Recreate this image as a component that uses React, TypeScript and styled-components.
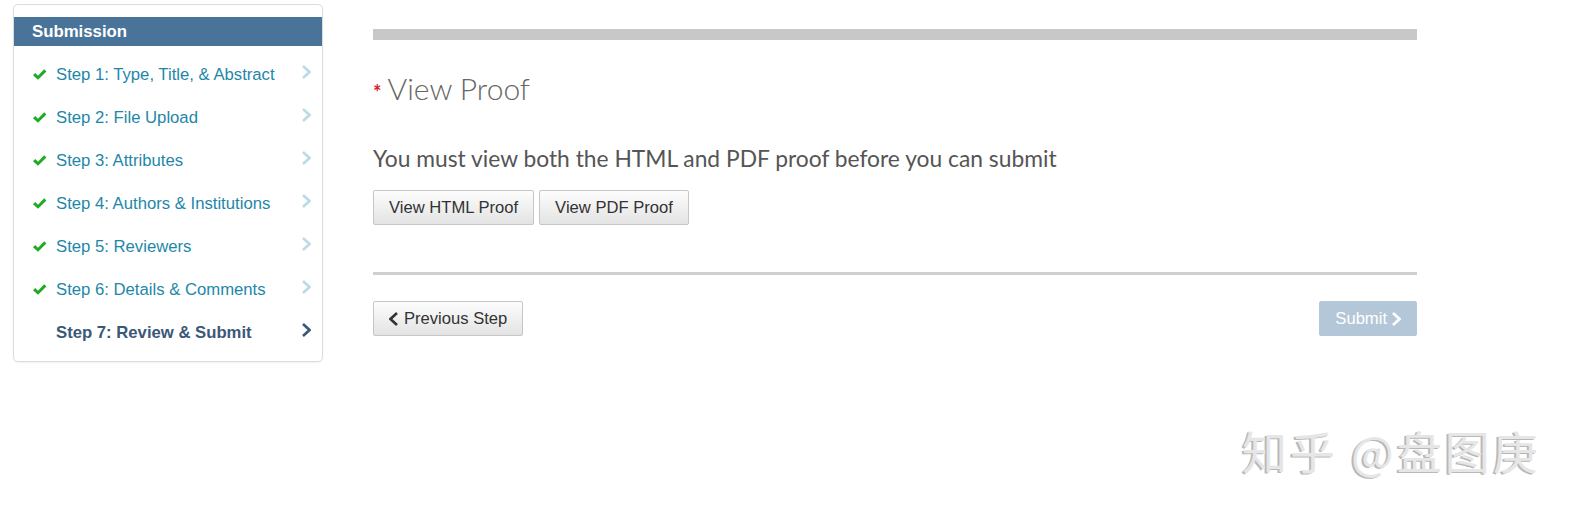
import React from 'react';
import styled, { createGlobalStyle } from 'styled-components';

const GlobalStyle = createGlobalStyle`
  html, body {
    margin: 0;
    padding: 0;
    background: #fff;
  }
  body {
    font-family: "Liberation Sans", Arial, sans-serif;
    width: 1573px;
    height: 516px;
    overflow: hidden;
    position: relative;
  }
`;

const Page = styled.div`
  display: flex;
  align-items: flex-start;
  padding: 4px 0 0 13px;
  gap: 50px;
`;

const Sidebar = styled.div`
  width: 308px;
  border: 1px solid #dcdcdc;
  border-radius: 5px;
  padding: 12px 0 7px;
  box-shadow: 0 1px 2px rgba(0, 0, 0, 0.06);
`;

const SidebarHeader = styled.div`
  height: 29px;
  background: #4a7399;
  color: #fff;
  font-weight: bold;
  font-size: 16.8px;
  display: flex;
  align-items: center;
  padding-left: 18px;
`;

const StepList = styled.ul`
  list-style: none;
  margin: 0;
  padding: 7px 0 0;
`;

const StepRow = styled.li<{ $current?: boolean }>`
  height: 43px;
  display: flex;
  align-items: center;
  padding: 0 11px 0 18px;
  font-size: 16.7px;
  color: ${p => (p.$current ? '#3b5878' : '#1e87a8')};
  font-weight: ${p => (p.$current ? 'bold' : 'normal')};
`;

const CheckSlot = styled.span`
  width: 24px;
  display: flex;
  align-items: center;
`;

const StepLabel = styled.span`
  flex: 1;
`;

const ChevronSlot = styled.span`
  display: flex;
  margin-top: -6px;
`;

const Main = styled.div`
  width: 1044px;
  padding-top: 25px;
`;

const ProgressBar = styled.div`
  height: 11px;
  background: #c8c8c8;
`;

const Heading = styled.h2`
  margin: 30px 0 0;
  font-family: "Lato", "Open Sans", sans-serif;
  font-weight: 300;
  font-size: 30px;
  color: #666;
  display: flex;
  align-items: baseline;
  gap: 6px;
`;

const Required = styled.span`
  color: #d0202e;
  font-size: 20px;
  font-weight: bold;
`;

const Notice = styled.p`
  margin: 38px 0 0;
  font-family: "Lato", "Open Sans", sans-serif;
  font-size: 22.8px;
  color: #555;
`;

const ButtonRow = styled.div`
  display: flex;
  gap: 5px;
  margin-top: 18px;
`;

const Button = styled.button`
  height: 35px;
  padding: 0 15px;
  font-family: "Liberation Sans", Arial, sans-serif;
  font-size: 16.6px;
  color: #333;
  border: 1px solid #c6c6c6;
  border-radius: 2px;
  background: linear-gradient(#fdfdfd, #e3e3e3);
  display: flex;
  align-items: center;
  gap: 5px;
  cursor: pointer;
`;

const Divider = styled.hr`
  margin: 47px 0 0;
  border: none;
  height: 3px;
  background: #cfcfcf;
`;

const NavRow = styled.div`
  display: flex;
  justify-content: space-between;
  margin-top: 26px;
`;

const SubmitButton = styled.button`
  height: 35px;
  padding: 0 15px;
  font-family: "Liberation Sans", Arial, sans-serif;
  font-size: 16.6px;
  color: #fff;
  border: 1px solid #b5c7d8;
  border-radius: 2px;
  background: #b4c7d9;
  display: flex;
  align-items: center;
  gap: 4px;
`;

const Watermark = styled.div`
  position: absolute;
  left: 1242px;
  top: 418px;
  font-family: "Noto Sans CJK SC", sans-serif;
  font-size: 45px;
  letter-spacing: 3px;
  color: #e6e6e6;
  text-shadow: -2px 1px 0 #b8b8b8;
  white-space: nowrap;
`;

const Check = () => (
  <svg width="15" height="13" viewBox="0 0 15 13">
    <path d="M1 7.2 L3.2 5 L6 7.8 L12.2 1.2 L14.4 3.4 L6 11.8 Z" fill="#1faa23" />
  </svg>
);

const Chevron = ({ color, dir = 'right' }: { color: string; dir?: 'left' | 'right' }) => (
  <svg width="10" height="14" viewBox="0 0 10 14">
    <path
      d={dir === 'right' ? 'M2 1 L8.5 7 L2 13' : 'M8 1 L1.5 7 L8 13'}
      fill="none"
      stroke={color}
      strokeWidth="2.6"
    />
  </svg>
);

const steps = [
  'Step 1: Type, Title, & Abstract',
  'Step 2: File Upload',
  'Step 3: Attributes',
  'Step 4: Authors & Institutions',
  'Step 5: Reviewers',
  'Step 6: Details & Comments',
  'Step 7: Review & Submit',
];

export default function App() {
  return (
    <>
      <GlobalStyle />
      <Page>
        <Sidebar>
          <SidebarHeader>Submission</SidebarHeader>
          <StepList>
            {steps.map((s, i) => {
              const current = i === steps.length - 1;
              return (
                <StepRow key={s} $current={current}>
                  <CheckSlot>{!current && <Check />}</CheckSlot>
                  <StepLabel>{s}</StepLabel>
                  <ChevronSlot>
                    <Chevron color={current ? '#3b5878' : '#bcdbe6'} />
                  </ChevronSlot>
                </StepRow>
              );
            })}
          </StepList>
        </Sidebar>
        <Main>
          <ProgressBar />
          <Heading>
            <Required>*</Required>View Proof
          </Heading>
          <Notice>You must view both the HTML and PDF proof before you can submit</Notice>
          <ButtonRow>
            <Button>View HTML Proof</Button>
            <Button>View PDF Proof</Button>
          </ButtonRow>
          <Divider />
          <NavRow>
            <Button>
              <Chevron color="#333" dir="left" />
              Previous Step
            </Button>
            <SubmitButton disabled>
              Submit
              <Chevron color="#fff" />
            </SubmitButton>
          </NavRow>
        </Main>
      </Page>
      <Watermark>知乎 @盘图庚</Watermark>
    </>
  );
}
